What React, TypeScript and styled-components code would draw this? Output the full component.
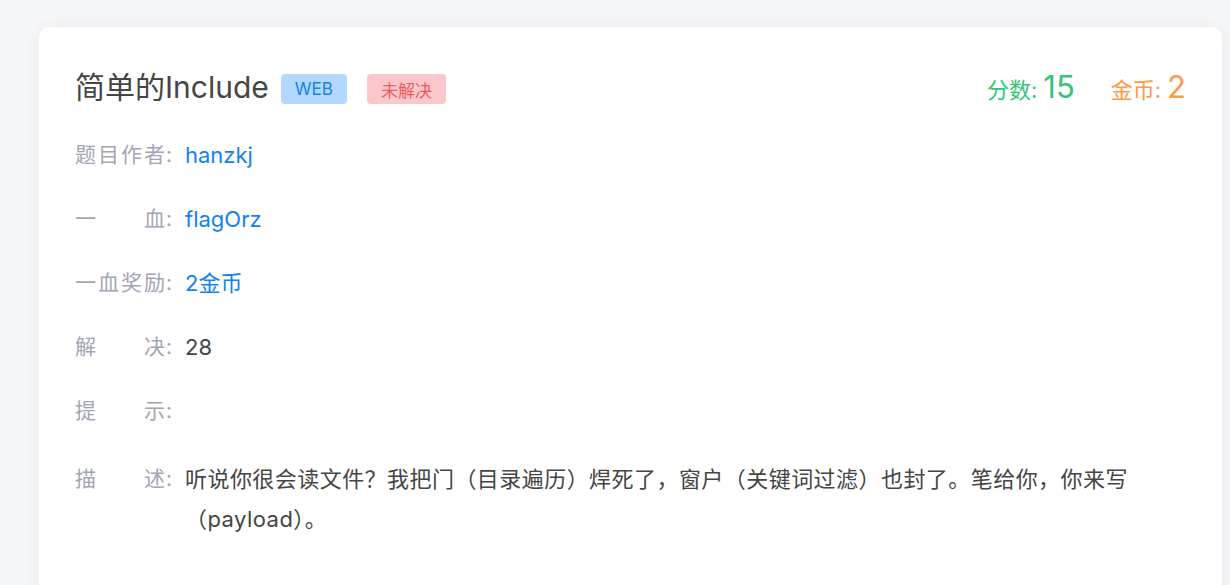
import styled, { createGlobalStyle } from 'styled-components';

const GlobalStyle = createGlobalStyle`
  html, body {
    margin: 0;
    padding: 0;
    background: #f5f6f8;
    font-family: Inter, "Noto Sans CJK SC", "Noto Sans", sans-serif;
  }
`;

const Page = styled.div`
  padding: 27px 8px 0 39px;
  height: 585px;
  box-sizing: border-box;
  overflow: hidden;
`;

const Card = styled.div`
  width: 1183px;
  min-height: 600px;
  box-sizing: border-box;
  background: #fff;
  border-radius: 10px;
  box-shadow: 0 2px 18px rgba(30, 40, 70, 0.06);
  padding: 40px 36px 0;
`;

const Header = styled.div`
  display: flex;
  align-items: center;
  height: 40px;
`;

const Title = styled.h1`
  margin: 0;
  font-size: 30px;
  font-weight: 400;
  color: #454545;
  line-height: 40px;
`;

const Tag = styled.span<{ $tone: 'blue' | 'red' }>`
  display: inline-flex;
  align-items: center;
  justify-content: center;
  height: 30px;
  padding: 0 14px;
  border-radius: 4px;
  font-size: 17px;
  margin-left: ${(p) => (p.$tone === 'blue' ? '12px' : '20px')};
  margin-top: 4px;
  background: ${(p) => (p.$tone === 'blue' ? '#b3d8ff' : '#fac8cb')};
  color: ${(p) => (p.$tone === 'blue' ? '#1481f2' : '#ef5a5f')};
`;

const Stats = styled.div`
  margin-left: auto;
  display: flex;
  align-items: baseline;
  gap: 36px;
  margin-top: -2px;
`;

const Stat = styled.span<{ $color: string }>`
  color: ${(p) => p.$color};
  font-size: 22px;
  b {
    font-weight: 400;
    font-size: 31px;
    margin-left: 6px;
  }
`;

const Rows = styled.div`
  display: flex;
  flex-direction: column;
  gap: 32px;
  margin-top: 32px;
`;

const Row = styled.div<{ $tall?: boolean }>`
  display: flex;
  align-items: flex-start;
  font-size: 21px;
  line-height: ${(p) => (p.$tall ? '40px' : '32px')};
`;

const Label = styled.div`
  flex: none;
  display: flex;
  width: 110px;
  color: #a3a5b6;
`;

const LabelText = styled.span`
  display: inline-block;
  width: 90px;
  text-align: justify;
  text-align-last: justify;
`;

const Colon = styled.span`
  margin-left: 1px;
`;

const Value = styled.div<{ $link?: boolean; $tall?: boolean }>`
  color: ${(p) => (p.$link ? '#1481f2' : '#454545')};
  font-size: 22px;
  letter-spacing: ${(p) => (p.$tall ? '0.45px' : '0')};
  flex: 1;
  max-width: 960px;
`;

const rows: { label: string; value: string; link?: boolean; tall?: boolean }[] = [
  { label: '题目作者', value: 'hanzkj', link: true },
  { label: '一血', value: 'flagOrz', link: true },
  { label: '一血奖励', value: '2金币', link: true },
  { label: '解决', value: '28' },
  { label: '提示', value: '' },
  {
    label: '描述',
    value:
      '听说你很会读文件？我把门（目录遍历）焊死了，窗户（关键词过滤）也封了。笔给你，你来写（payload）。',
    tall: true,
  },
];

export default function App() {
  return (
    <Page>
      <GlobalStyle />
      <Card>
        <Header>
          <Title>简单的Include</Title>
          <Tag $tone="blue">WEB</Tag>
          <Tag $tone="red">未解决</Tag>
          <Stats>
            <Stat $color="#35c477">
              分数:<b>15</b>
            </Stat>
            <Stat $color="#fb9a48">
              金币:<b>2</b>
            </Stat>
          </Stats>
        </Header>
        <Rows>
          {rows.map((r) => (
            <Row key={r.label} $tall={r.tall}>
              <Label>
                <LabelText>{r.label}</LabelText>
                <Colon>:</Colon>
              </Label>
              <Value $link={r.link} $tall={r.tall}>
                {r.value}
              </Value>
            </Row>
          ))}
        </Rows>
      </Card>
    </Page>
  );
}
